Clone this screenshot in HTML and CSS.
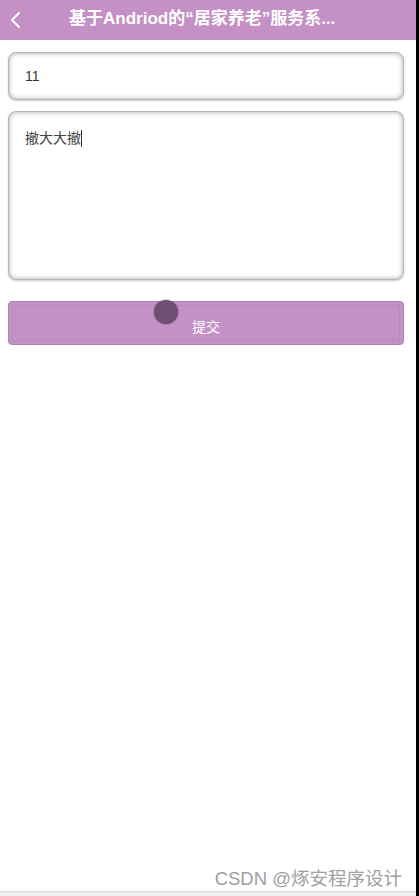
FILE: index.html
```html
<!DOCTYPE html>
<html lang="zh">
<head>
<meta charset="utf-8">
<link rel="stylesheet" href="styles.css">
</head>
<body>
<div class="page">
  <header class="bar">
    <svg class="back" width="14" height="18" viewBox="0 0 14 18"><path d="M10 2 L3 9 L10 16" fill="none" stroke="#fff" stroke-width="2" stroke-linecap="round" stroke-linejoin="round"/></svg>
    <div class="title">基于Andriod的“居家养老”服务系...</div>
  </header>
  <main class="form">
    <div class="field field-input">11</div>
    <div class="field field-area"><span>撤大大撤</span><span class="caret"></span></div>
    <button class="submit"><span class="touch"></span>提交</button>
  </main>
  <div class="watermark">CSDN @烼安程序设计</div>
  <div class="bottomline"></div>
</div>
</body>
</html>
```
FILE: styles.css
```css
html, body {
  margin: 0;
  padding: 0;
  background: #fff;
}
body {
  font-family: "Liberation Sans", "Noto Sans CJK SC", sans-serif;
  width: 419px;
  height: 896px;
  overflow: hidden;
}
.page {
  position: relative;
  width: 416px;
  height: 896px;
  border-right: 3px solid #000;
  background: #fff;
  display: flex;
  flex-direction: column;
}
.bar {
  height: 40px;
  background: #c490c6;
  display: flex;
  align-items: center;
  position: relative;
}
.back {
  margin-left: 9px;
}
.title {
  position: absolute;
  left: 69px;
  top: 0;
  line-height: 38px;
  color: #fff;
  font-size: 17px;
  font-weight: bold;
  letter-spacing: 0;
  white-space: nowrap;
}
.form {
  padding: 12px 12px 0 8px;
  display: flex;
  flex-direction: column;
}
.field {
  box-sizing: border-box;
  width: 396px;
  border: 1px solid #b4b4b4;
  border-radius: 8px;
  box-shadow: inset 0 0 5px rgba(0,0,0,0.35), 0 1px 2px rgba(0,0,0,0.2);
  background: #fff;
  color: #333;
  font-size: 14px;
  padding-left: 16px;
}
.field-input {
  height: 48px;
  line-height: 46px;
}
.field-area {
  margin-top: 11px;
  height: 169px;
  padding-top: 16px;
  line-height: 20px;
  display: flex;
  align-items: flex-start;
  color: #444;
}
.caret {
  display: inline-block;
  width: 1px;
  height: 17px;
  margin-top: 2px;
  background: #333;
}
.submit {
  position: relative;
  margin-top: 21px;
  width: 396px;
  height: 44px;
  box-sizing: border-box;
  border: 1px solid #b57fb8;
  border-radius: 4px;
  background: #c490c6;
  box-shadow: inset 0 0 0 3px #c490c6, inset 0 0 0 4px #bb86bd;
  color: #fff;
  font-family: "Noto Sans CJK SC", sans-serif;
  font-size: 14px;
  padding: 6px 0 0 0;
}
.touch {
  position: absolute;
  left: 145px;
  top: -2px;
  width: 24px;
  height: 24px;
  border-radius: 50%;
  background: #6e4f72;
  box-shadow: 0 0 2px rgba(80,50,80,0.6);
}
.watermark {
  position: absolute;
  right: 14px;
  top: 864px;
  font-size: 18.5px;
  color: #a0a0a0;
  font-family: "Liberation Sans", "Noto Sans CJK SC", sans-serif;
}
.bottomline {
  position: absolute;
  left: 0;
  right: 0;
  bottom: 0;
  height: 4px;
  background: #f0f0f0;
  border-top: 1px solid #dcdcdc;
}
```
